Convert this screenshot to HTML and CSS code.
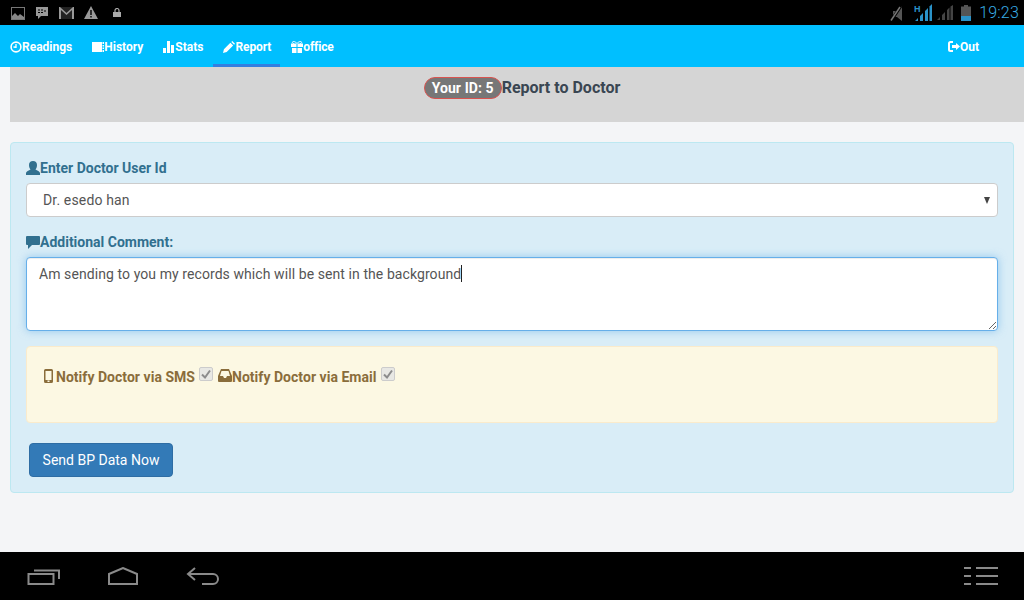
FILE: index.html
```html
<!DOCTYPE html>
<html lang="en">
<head>
<meta charset="utf-8">
<title>Report to Doctor</title>
<link rel="stylesheet" href="styles.css">
</head>
<body>
<div class="status">
  <div class="status-left">
    <svg class="si" width="14" height="14" viewBox="0 0 14 14"><rect x="0.5" y="1.5" width="13" height="12" fill="none" stroke="#777"/><path d="M1 13V10l3-3 3 3 2-2 4 3v2z" fill="#888"/></svg>
    <svg class="si" width="14" height="14" viewBox="0 0 14 14"><path d="M1 1h12v9H6l-3 3v-3H1z" fill="#999"/><path d="M3 4h2M6 4h2M3 6.500h2M6 6.500h2M9 5h2" stroke="#000"/></svg>
    <svg class="si" width="15" height="12" viewBox="0 0 15 12"><path d="M0 0h15v12H0z" fill="#999"/><path d="M2 12V3l5.500 5L13 3v9z" fill="#222"/><path d="M1 0l6.500 6L14 0z" fill="#222"/></svg>
    <svg class="si" width="14" height="13" viewBox="0 0 14 13"><path d="M7 0l7 13H0z" fill="#999"/><path d="M6.300 4h1.400v5H6.300zM6.300 10h1.400v1.500H6.300z" fill="#000"/></svg>
    <svg class="si si-lock" width="8" height="9" viewBox="0 0 8 9"><path d="M0 4h8v5H0z" fill="#aaa"/><path d="M2 4.500V2.500a2 2 0 0 1 4 0v2" fill="none" stroke="#aaa" stroke-width="1.200"/></svg>
  </div>
  <div class="status-right">
    <svg class="mute" width="13" height="17" viewBox="0 0 13 17"><path d="M12 1v15L7 12H3V6h4z" fill="#555"/><path d="M11 1L1 16" stroke="#000" stroke-width="3"/><path d="M10 2L1 15.500" stroke="#777" stroke-width="1.500"/></svg>
    <svg class="sig" width="18" height="18" viewBox="0 0 18 18"><path d="M1 17l3-3v3zM6 17V12l3-3v8zM11 17V7l3-3v13z" fill="#2a93c9"/><path d="M15.500 17V2.500L18 0v17z" fill="#2a93c9"/><text x="0" y="7.500" class="sig-h">H</text></svg>
    <svg width="16" height="15" viewBox="0 0 16 15"><path d="M0 15l3-3v3zM5 15V10l3-3v8zM10 15V5l2.500-2.500V15zM13.500 15V1.500L16 0v15z" fill="#444"/></svg>
    <svg class="batt" width="10" height="16" viewBox="0 0 10 16"><path d="M3 0h4v1.500h3V16H0V1.500h3z" fill="#555"/><path d="M0 11h10v5H0z" fill="#2a93c9"/></svg>
    <span class="clock">19:23</span>
  </div>
</div>

<nav class="nav">
  <a class="nav-item"><svg class="ni" width="12" height="12" viewBox="0 0 12 12"><circle cx="6" cy="6" r="4.900" fill="none" stroke="#fff" stroke-width="1.600"/><path d="M6 3v3.200L3.500 6" fill="none" stroke="#fff" stroke-width="1.300"/></svg>Readings</a>
  <a class="nav-item"><svg class="ni" width="12" height="10" viewBox="0 0 12 10"><path d="M0 0h10v10H0zM10.500 0H12v2h-1.500zM10.500 3H12v1.500h-1.500zM10.500 5.500H12V7h-1.500zM10.500 8H12v2h-1.500z" fill="#fff"/></svg>History</a>
  <a class="nav-item"><svg class="ni" width="12" height="12" viewBox="0 0 12 12"><path d="M0 7h3v5H0zM4 0h3v12H4zM8 4h3v8H8z" fill="#fff"/></svg>Stats</a>
  <a class="nav-item active"><svg class="ni" width="12" height="12" viewBox="0 0 13 13"><path d="M0 13l1-4 7-7 3 3-7 7zM9 1l1-1 3 3-1 1z" fill="#fff"/></svg>Report</a>
  <a class="nav-item office"><svg class="ni" width="12" height="12" viewBox="0 0 12 12"><path d="M0 2.500h5.500V6H0zM6.500 2.500H12V6H6.500zM1 7h4.500v5H1zM6.500 7H11v5H6.500z" fill="#fff"/><path d="M3 2.500C1 2.500 1 .5 2.500.5S5 1.500 6 2.500C7 1.500 8 .5 9.500.5S11 2.500 9 2.500" fill="none" stroke="#fff"/></svg>office</a>
  <a class="nav-item nav-out"><svg class="ni" width="12" height="11" viewBox="0 0 12 11"><path d="M5 1H2.500A1.500 1.500 0 0 0 1 2.500v6A1.500 1.500 0 0 0 2.500 10H5" fill="none" stroke="#fff" stroke-width="2"/><path d="M4 4h4V2l4 3.500L8 9V7H4z" fill="#fff"/></svg>Out</a>
</nav>

<main class="main">
  <header class="page-head">
    <span class="badge">Your ID: 5</span><span class="page-title">Report to Doctor</span>
  </header>
  <section class="panel">
    <label class="field-label"><svg class="li" width="14" height="14" viewBox="0 0 14 14"><path d="M0 14v-2c0-1.500 3-2.500 4.500-3.500C3.500 7 3 6 3 4c0-2.500 1.500-4 4-4s4 1.500 4 4c0 2-.5 3-1.500 4.500C11 9.500 14 10.500 14 12v2z" fill="#31708f"/></svg>Enter Doctor User Id</label>
    <div class="select"><span>Dr. esedo han</span><i class="arrow"></i></div>
    <label class="field-label second"><svg class="li" width="14" height="13" viewBox="0 0 14 13"><path d="M1 0h12a1 1 0 0 1 1 1v7a1 1 0 0 1-1 1H6l-4 4V9H1a1 1 0 0 1-1-1V1a1 1 0 0 1 1-1z" fill="#31708f"/></svg>Additional Comment:</label>
    <div class="textarea">Am sending to you my records which will be sent in the background<i class="caret"></i></div>
    <div class="notify">
      <svg class="wi" width="9" height="14" viewBox="0 0 9 14"><path d="M1.500 0h6A1.500 1.500 0 0 1 9 1.500v11A1.500 1.500 0 0 1 7.500 14h-6A1.500 1.500 0 0 1 0 12.500v-11A1.500 1.500 0 0 1 1.500 0zM1.500 2v9h6V2zM3.500 11.500v1.500h2v-1.500z" fill="#8a6d3b" fill-rule="evenodd"/></svg><span class="notify-text">Notify Doctor via SMS</span>
      <span class="check"><svg width="12" height="12" viewBox="0 0 12 12"><path d="M2 6.500l3 3 5-7" fill="none" stroke="#8c8c8c" stroke-width="2"/></svg></span>
      <svg class="wi wi-box" width="14" height="13" viewBox="0 0 14 13"><path d="M3 0h8l3 7v5a1 1 0 0 1-1 1H1a1 1 0 0 1-1-1V7zM3.500 2L2 7h3l1 2h2l1-2h3l-1.500-5z" fill="#8a6d3b" fill-rule="evenodd"/></svg><span class="notify-text">Notify Doctor via Email</span>
      <span class="check"><svg width="12" height="12" viewBox="0 0 12 12"><path d="M2 6.500l3 3 5-7" fill="none" stroke="#8c8c8c" stroke-width="2"/></svg></span>
    </div>
    <button class="send" type="button">Send BP Data Now</button>
  </section>
</main>

<div class="sysbar">
  <div class="sys-left">
    <svg width="33" height="20" viewBox="0 0 33 20"><path d="M1.500 8h25v10h-25zM7 4.500h25V13" fill="none" stroke="#8a8a8a" stroke-width="2"/></svg>
    <svg width="32" height="18" viewBox="0 0 32 18"><path d="M2 7L16 1l14 6v10H2z" fill="none" stroke="#8a8a8a" stroke-width="2"/></svg>
    <svg width="34" height="20" viewBox="0 0 34 20"><path d="M9 2L2 8l7 6M2 8h25a5 5 0 0 1 5 5v0a5 5 0 0 1-5 5H16" fill="none" stroke="#8a8a8a" stroke-width="2"/></svg>
  </div>
  <svg class="sys-menu" width="34" height="18" viewBox="0 0 34 18"><path d="M0 1h7M12 1h22M0 9h7M12 9h22M0 17h7M12 17h22" stroke="#8a8a8a" stroke-width="2"/></svg>
</div>
</body>
</html>
```

FILE: styles.css
```css
* { box-sizing: border-box; }
html, body { margin: 0; height: 100%; }
body {
  width: 1024px;
  height: 600px;
  overflow: hidden;
  display: flex;
  flex-direction: column;
  background: #f4f5f7;
  font-family: Roboto, "Liberation Sans", sans-serif;
  font-size: 14px;
  color: #333;
}
svg { display: block; flex: none; }

.status {
  height: 25px;
  flex: none;
  background: #000;
  display: flex;
  justify-content: space-between;
  align-items: center;
  padding: 0 5px 0 11px;
}
.status-left { display: flex; align-items: center; gap: 10px; }
.si-lock { margin-left: 5px; }
.status-right { display: flex; align-items: center; gap: 5px; }
.mute { margin-top: 1px; }
.sig { margin-left: 6px; }
.sig-h { font: 700 9px "Liberation Sans", sans-serif; fill: #2a93c9; }
.batt { margin: 0 0 0 3px; }
.clock { font-size: 16px; font-weight: 300; color: #38aee6; margin-left: 3px; letter-spacing: 0.2px; }

.nav {
  height: 42px;
  flex: none;
  background: #00bfff;
  display: flex;
}
.nav-item {
  display: flex;
  align-items: center;
  height: 42px;
  padding: 1px 10px 0;
  color: #fff;
  font-size: 12px;
  font-weight: 700;
}
.nav-item.active { border-bottom: 3px solid #337ee0; padding: 4px 9px 0 10px; letter-spacing: -0.1px; }
.nav-item.office { padding-left: 11px; letter-spacing: -0.15px; }
.nav-out { margin-left: auto; margin-right: 35px; }

.main { flex: 1; display: flex; flex-direction: column; min-height: 0; padding: 0 10px; }
.page-head {
  height: 55px;
  flex: none;
  margin-right: -10px;
  background: #d5d5d5;
  display: flex;
  justify-content: center;
  align-items: flex-start;
  padding: 10px 0 0 10px;
}
.badge {
  display: block;
  height: 22px;
  line-height: 21px;
  padding: 0 7px;
  border: 1px solid #d9534f;
  border-radius: 12px;
  background: #777;
  color: #fff;
  font-size: 14px;
  font-weight: 700;
  letter-spacing: 0.08px;
}
.page-title { font-size: 16px; font-weight: 700; color: #3a4652; line-height: 22px; }

.panel {
  margin-top: 20px;
  height: 351px;
  border: 1px solid #bce8f1;
  border-radius: 4px;
  background: #d9edf7;
  padding: 15px 15px 0;
  display: flex;
  flex-direction: column;
  align-items: stretch;
}
.field-label {
  display: flex;
  align-items: center;
  height: 20px;
  font-size: 14px;
  font-weight: 700;
  color: #31708f;
}
.field-label.second { margin-top: 15px; }
.select {
  margin-top: 5px;
  height: 34px;
  flex: none;
  background: #fff;
  border: 1px solid #ccc;
  border-radius: 4px;
  display: flex;
  align-items: center;
  justify-content: space-between;
  padding: 0 7px 0 16px;
  color: #555;
  letter-spacing: 0.15px;
}
.arrow {
  width: 0;
  height: 0;
  border-left: 3.500px solid transparent;
  border-right: 3.500px solid transparent;
  border-top: 7px solid #444;
}
.textarea {
  margin-top: 5px;
  height: 74px;
  flex: none;
  background: #fff;
  border: 1px solid #66afe9;
  border-radius: 4px;
  box-shadow: inset 0 1px 1px rgba(0,0,0,.075), 0 0 8px rgba(102,175,233,.6);
  padding: 6px 12px;
  line-height: 20px;
  color: #555;
  letter-spacing: 0.08px;
  resize: both;
  overflow: auto;
}
.caret { display: inline-block; width: 1px; height: 17px; background: #222; vertical-align: -3px; }
.notify {
  margin-top: 15px;
  height: 77px;
  flex: none;
  background: #fcf8e3;
  border: 1px solid #faebcc;
  border-radius: 4px;
  padding: 20px 17px 0;
  display: flex;
  align-items: flex-start;
  color: #8a6d3b;
  font-weight: 700;
}
.wi { margin-top: 2px; margin-right: 3px; }
.wi-box { margin-left: 5px; margin-right: 0; }
.notify-text { line-height: 20px; letter-spacing: 0.03px; }
.check {
  width: 14px;
  height: 14px;
  margin: 0 0 0 4px;
  border: 1px solid #ccc;
  border-radius: 2px;
  background: #e8e8e4;
  display: flex;
  align-items: center;
  justify-content: center;
}
.send {
  align-self: flex-start;
  margin: 20px 0 0 3px;
  width: 144px;
  height: 34px;
  background: #337ab7;
  border: 1px solid #2e6da4;
  border-radius: 4px;
  color: #fff;
  font: 400 14px Roboto, "Liberation Sans", sans-serif;
  padding: 0;
}

.sysbar {
  height: 48px;
  flex: none;
  background: #000;
  display: flex;
  align-items: center;
  justify-content: space-between;
  padding: 0 26px 0 27px;
}
.sys-left { display: flex; align-items: center; gap: 47px; }
```
